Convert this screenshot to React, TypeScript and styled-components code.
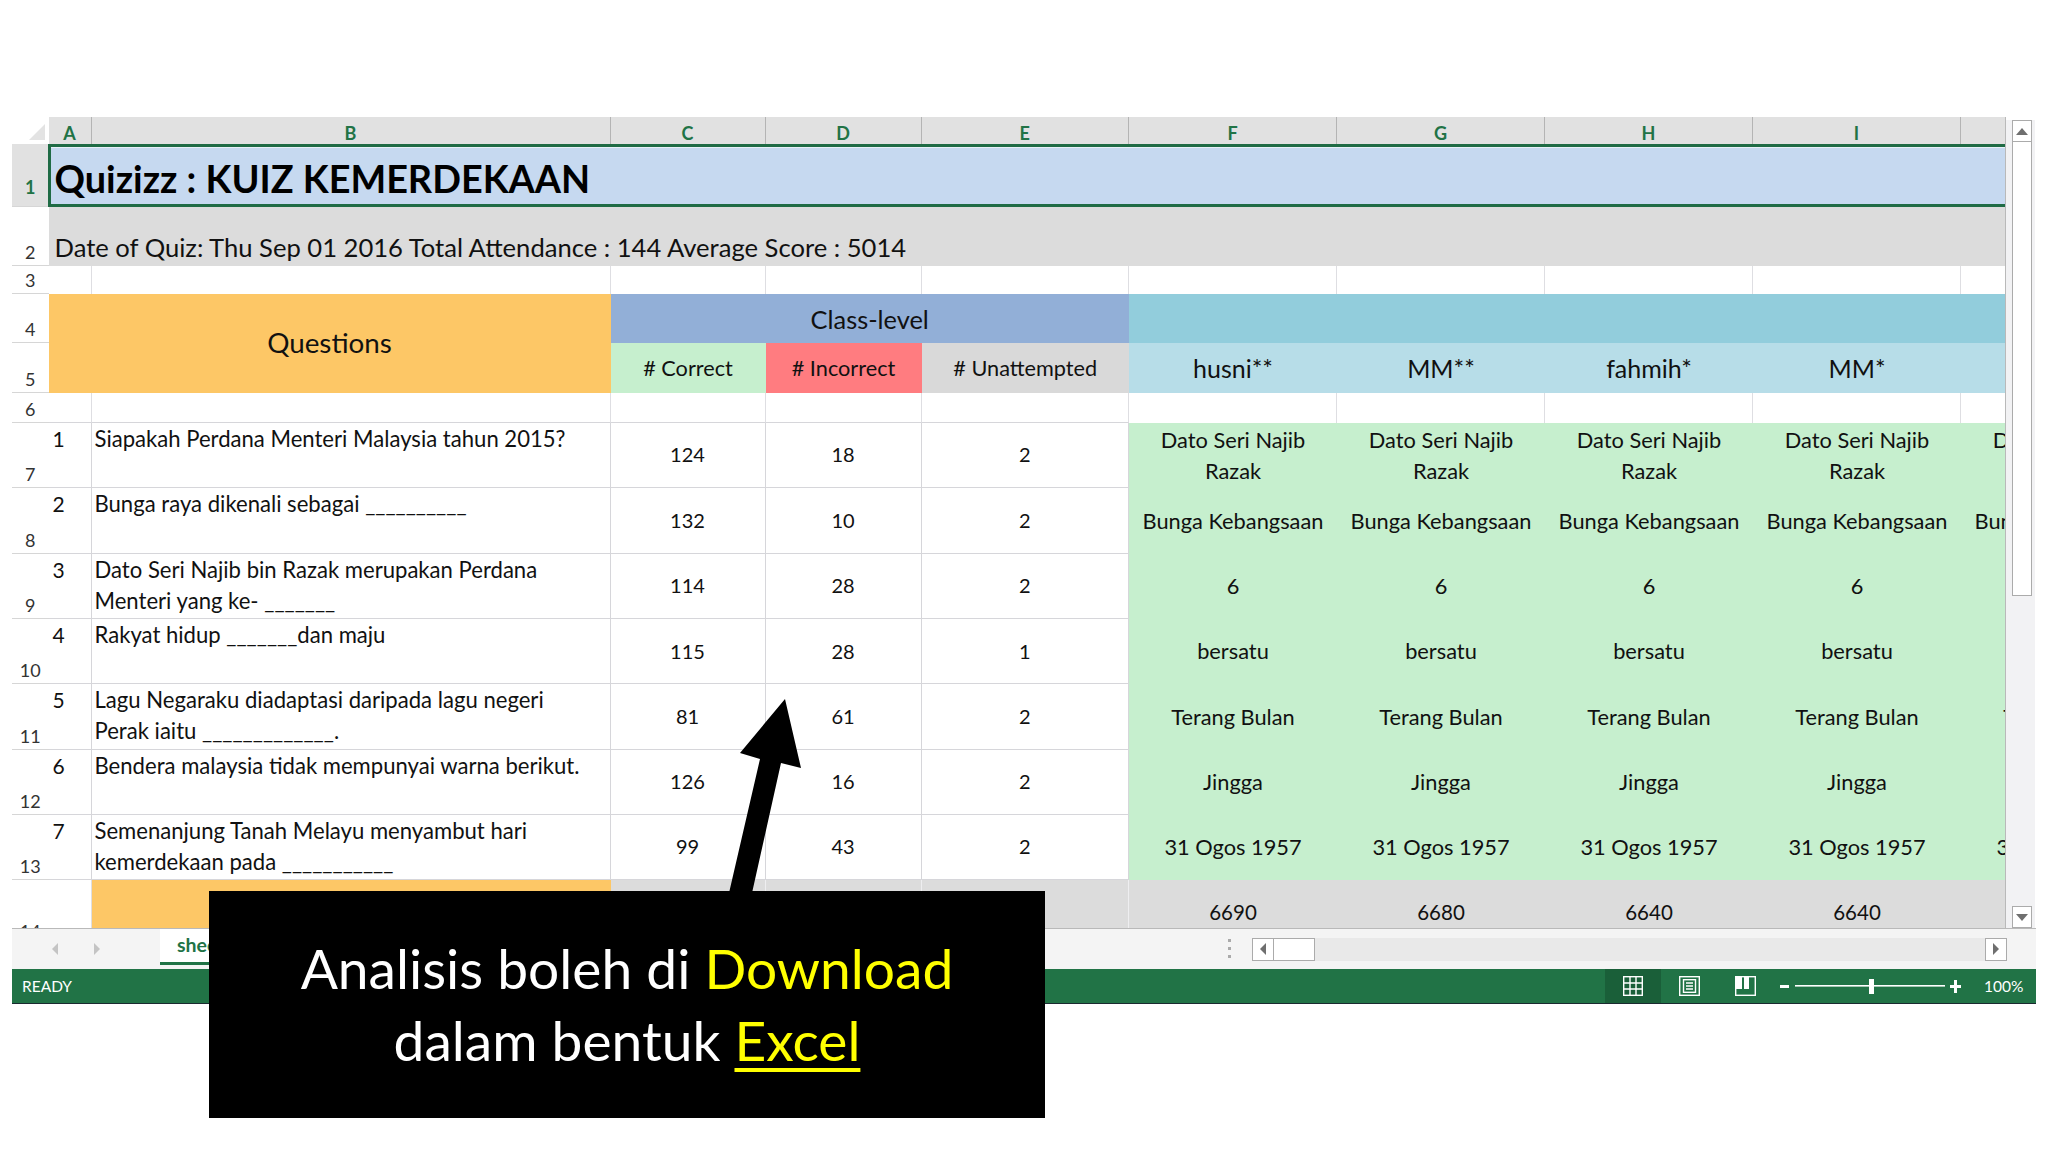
import React from 'react';
import styled, { createGlobalStyle } from 'styled-components';

interface Question {
  n: number;
  text: string;
  correct: number;
  incorrect: number;
  unattempted: number;
  answer: string;
}

const questions: Question[] = [
  { n: 1, text: 'Siapakah Perdana Menteri Malaysia tahun 2015?', correct: 124, incorrect: 18, unattempted: 2, answer: 'Dato Seri Najib Razak' },
  { n: 2, text: 'Bunga raya dikenali sebagai __________', correct: 132, incorrect: 10, unattempted: 2, answer: 'Bunga Kebangsaan' },
  { n: 3, text: 'Dato Seri Najib bin Razak merupakan Perdana Menteri yang ke- _______', correct: 114, incorrect: 28, unattempted: 2, answer: '6' },
  { n: 4, text: 'Rakyat hidup _______dan maju', correct: 115, incorrect: 28, unattempted: 1, answer: 'bersatu' },
  { n: 5, text: 'Lagu Negaraku diadaptasi daripada lagu negeri Perak iaitu _____________.', correct: 81, incorrect: 61, unattempted: 2, answer: 'Terang Bulan' },
  { n: 6, text: 'Bendera malaysia tidak mempunyai warna berikut.', correct: 126, incorrect: 16, unattempted: 2, answer: 'Jingga' },
  { n: 7, text: 'Semenanjung Tanah Melayu menyambut hari kemerdekaan pada ___________', correct: 99, incorrect: 43, unattempted: 2, answer: '31 Ogos 1957' }
];

const columns = ['A', 'B', 'C', 'D', 'E', 'F', 'G', 'H', 'I', ''];
const students = ['husni**', 'MM**', 'fahmih*', 'MM*', ''];
const totals = ['6690', '6680', '6640', '6640', ''];

const GlobalStyle = createGlobalStyle`
  html, body {
    margin: 0;
    padding: 0;
    background: #fff;
  }

  body {
    font-family: 'Lato', 'Liberation Sans', sans-serif;
    color: #111;
  }
`;

const Page = styled.div`
  position: relative;
  width: 2048px;
  height: 1152px;
  overflow: hidden;
  background: #fff;
  padding: 117px 0 0 12px;
  box-sizing: border-box;
`;

const Workbook = styled.div`
  width: 2024px;
  display: flex;
  flex-direction: column;
`;

const SheetArea = styled.div`
  display: flex;
  height: 811px;
`;

const Sheet = styled.div`
  width: 1994px;
  height: 811px;
  overflow: hidden;
  display: grid;
  grid-template-columns: 36.5px 43px 519px 155px 156px 207.5px 208px 208px 208px 208px 208px;
  grid-template-rows: 27px 63px 59px 28px 49px 50px 29.5px 65.5px 65.5px 65.5px 65px 65.5px 65.5px 64.5px 65px;
  border-right: 1px solid #b9b9b9;
  box-sizing: border-box;
`;

const Corner = styled.div`
  position: relative;
  background: #fff;

  &::after {
    content: '';
    position: absolute;
    right: 4px;
    bottom: 4px;
    border-style: solid;
    border-width: 0 0 16px 16px;
    border-color: transparent transparent #e3e3e3 transparent;
  }
`;

const ColumnHead = styled.div`
  background: #e1e1e1;
  border-right: 1.5px solid #b4b4b4;
  color: #217346;
  font-weight: 700;
  font-size: 18px;
  display: flex;
  align-items: flex-end;
  justify-content: center;
  box-sizing: border-box;
`;

const RowHead = styled.div<{ $selected?: boolean }>`
  background: ${(p) => (p.$selected ? '#e1e1e1' : '#fff')};
  color: ${(p) => (p.$selected ? '#217346' : '#333')};
  font-weight: ${(p) => (p.$selected ? 700 : 400)};
  font-size: 18px;
  line-height: 22px;
  border-bottom: 1.5px solid #d6d6d6;
  display: flex;
  align-items: flex-end;
  justify-content: center;
  padding-bottom: ${(p) => (p.$selected ? '8px' : '2px')};
  box-sizing: border-box;
`;

const TitleCell = styled.div`
  grid-column: span 10;
  background: #c6d9f0;
  border: solid #1f6b45;
  border-width: 3px 0 3px 3px;
  box-shadow: inset 0 1px 0 #e8f0f8;
  display: flex;
  align-items: center;
  padding: 6px 0 0 4px;
  margin-left: -1px;
  font-size: 37.8px;
  font-weight: 700;
  color: #000;
  box-sizing: border-box;
`;

const InfoCell = styled.div`
  grid-column: span 10;
  background: #dcdcdc;
  display: flex;
  align-items: flex-end;
  padding: 0 0 3px 6px;
  font-size: 25.6px;
  line-height: 32px;
  box-sizing: border-box;
`;

const Blank = styled.div<{ $ruled?: boolean }>`
  background: #fff;
  border-right: 1.5px solid #dedee2;
  border-bottom: ${(p) => (p.$ruled ? '1.5px solid #d6d6da' : '0')};
  box-sizing: border-box;
`;

const QuestionsHead = styled.div`
  grid-column: span 2;
  grid-row: span 2;
  background: #fdc766;
  display: flex;
  align-items: center;
  justify-content: center;
  font-size: 27.8px;
  box-sizing: border-box;
  padding-bottom: 2px;
`;

const BandHead = styled.div<{ $span: number; $fill: string }>`
  grid-column: span ${(p) => p.$span};
  background: ${(p) => p.$fill};
  display: flex;
  align-items: center;
  justify-content: center;
  font-size: 25.4px;
`;

const SubHead = styled.div<{ $fill: string; $large?: boolean }>`
  background: ${(p) => p.$fill};
  display: flex;
  align-items: center;
  justify-content: center;
  font-size: ${(p) => (p.$large ? '25px' : '21.7px')};
`;

const NumberCell = styled.div`
  background: #fff;
  border-right: 1.5px solid #d6d6da;
  border-bottom: 1.5px solid #d6d6da;
  font-size: 21px;
  line-height: 31px;
  padding: 0 0 0 4px;
  box-sizing: border-box;
`;

const QuestionCell = styled(NumberCell)`
  padding: 0 20px 0 3px;
  font-size: 22.1px;
`;

const CountCell = styled(NumberCell)`
  display: flex;
  align-items: center;
  justify-content: center;
  padding: 0;
  font-size: 20px;
`;

const AnswerCell = styled.div`
  background: #c6efce;
  display: flex;
  align-items: center;
  justify-content: center;
  text-align: center;
  font-size: 21.8px;
  line-height: 31px;
  padding: 0 22px 1.5px;
  box-sizing: border-box;
`;

const WideAnswer = styled(AnswerCell)`
  padding: 0 0 1.5px;
  white-space: nowrap;
`;

const TotalLabel = styled.div`
  background: #fdc766;
`;

const TotalGray = styled.div`
  background: #dcdcdc;
  border-right: 1.5px solid #eeeef0;
`;

const TotalCell = styled.div`
  background: #dcdcdc;
  display: flex;
  align-items: center;
  justify-content: center;
  font-size: 20.5px;
`;

const VScroll = styled.div`
  width: 29px;
  background: linear-gradient(#fff 3px, #f2f2f4 3px);
  padding: 3px 3px 0 6px;
  box-sizing: border-box;
  display: flex;
  flex-direction: column;
`;

const ScrollButton = styled.div`
  height: 22px;
  background: #fff;
  border: 1.5px solid #ababab;
  box-sizing: border-box;
  display: flex;
  align-items: center;
  justify-content: center;
`;

const VThumb = styled.div`
  height: 454px;
  background: #fff;
  border: 1.5px solid #ababab;
  border-top: 0;
  box-sizing: border-box;
`;

const Spacer = styled.div`
  flex: 1;
`;

const Triangle = styled.span<{ $dir: 'up' | 'down' | 'left' | 'right'; $tone?: string }>`
  width: 0;
  height: 0;
  border-style: solid;
  border-color: transparent;
  ${(p) => {
    const c = p.$tone || '#6f6f6f';
    if (p.$dir === 'up') return `border-width: 0 6px 7px 6px; border-bottom-color: ${c};`;
    if (p.$dir === 'down') return `border-width: 7px 6px 0 6px; border-top-color: ${c};`;
    if (p.$dir === 'left') return `border-width: 6px 6px 6px 0; border-right-color: ${c};`;
    return `border-width: 6px 0 6px 6px; border-left-color: ${c};`;
  }}
`;

const TabBar = styled.div`
  height: 41px;
  background: #f4f4f4;
  border-top: 1.5px solid #b9b9b9;
  box-sizing: border-box;
  display: flex;
  align-items: flex-start;
`;

const TabNav = styled.div`
  width: 148px;
  height: 100%;
  display: flex;
  align-items: center;
  gap: 36px;
  padding: 0 0 1px 40px;
  box-sizing: border-box;
`;

const Tab = styled.div`
  width: 110px;
  height: 36px;
  background: #fff;
  border-bottom: 3px solid #217346;
  color: #217346;
  font-weight: 700;
  font-size: 19.5px;
  line-height: 32px;
  padding-left: 17px;
  box-sizing: border-box;
`;

const HScrollGroup = styled.div`
  margin-left: auto;
  margin-right: 29px;
  margin-top: 8.5px;
  width: 779px;
  height: 23px;
  display: flex;
  align-items: stretch;
`;

const SplitDots = styled.div`
  width: 3px;
  height: 21px;
  margin: 1px 21px 0 0;
  background: repeating-linear-gradient(#aaa 0 3px, transparent 3px 8px);
`;

const HTrack = styled.div`
  flex: 1;
  display: flex;
  background: #e9e9e9;
`;

const HButton = styled.div`
  width: 22px;
  background: #fff;
  border: 1.5px solid #ababab;
  box-sizing: border-box;
  display: flex;
  align-items: center;
  justify-content: center;
`;

const HThumb = styled.div`
  width: 41px;
  background: #fff;
  border: 1.5px solid #ababab;
  border-left: 0;
  box-sizing: border-box;
`;

const StatusBar = styled.div`
  height: 35px;
  background: #217346;
  border-bottom: 1.5px solid #1a2a30;
  box-sizing: border-box;
  display: flex;
  align-items: stretch;
  color: #fff;
  font-size: 15.5px;
`;

const StatusText = styled.div`
  display: flex;
  align-items: center;
  padding: 0 0 1px 10px;
`;

const ViewButtons = styled.div`
  margin-left: auto;
  display: flex;
`;

const ViewButton = styled.div<{ $active?: boolean }>`
  width: 56.5px;
  display: flex;
  align-items: center;
  justify-content: center;
  padding-bottom: 1px;
  background: ${(p) => (p.$active ? '#1a5f39' : 'transparent')};
`;

const ZoomControl = styled.svg`
  margin: auto 0 auto 6px;
`;

const ZoomLabel = styled.div`
  width: 52px;
  margin-left: 20px;
  display: flex;
  align-items: center;
  padding-bottom: 1px;
`;

const Callout = styled.div`
  position: absolute;
  left: 209px;
  top: 891px;
  width: 836px;
  height: 227px;
  background: #000;
  color: #fff;
  display: flex;
  flex-direction: column;
  align-items: center;
  justify-content: center;
  font-size: 55.1px;
  line-height: 72px;
`;

const CalloutLine = styled.div`
  position: relative;
  top: -1px;
`;

const Highlight = styled.span<{ $underline?: boolean }>`
  color: #ff0;
  text-decoration: ${(p) => (p.$underline ? 'underline' : 'none')};
  text-decoration-thickness: 4px;
  text-underline-offset: 7px;
`;

const ArrowSvg = styled.svg`
  position: absolute;
  left: 720px;
  top: 690px;
`;

function GridIcon (): React.ReactElement {
  return (
    <svg width='20' height='20' viewBox='0 0 20 20' fill='none' stroke='#fff' strokeWidth='1.4'>
      <rect x='0.7' y='0.7' width='18.6' height='18.6' />
      <path d='M7 1v18M13 1v18M1 7h18M1 13h18' />
    </svg>
  );
}

function PageIcon (): React.ReactElement {
  return (
    <svg width='21' height='20' viewBox='0 0 21 20' fill='none' stroke='#fff' strokeWidth='1.4'>
      <rect x='0.7' y='0.7' width='19.6' height='18.6' />
      <rect x='4.5' y='3.7' width='12' height='12.6' />
      <path d='M7 7h7M7 10h7M7 13h7' />
    </svg>
  );
}

function BreakIcon (): React.ReactElement {
  return (
    <svg width='21' height='20' viewBox='0 0 21 20' fill='none' stroke='#fff' strokeWidth='1.4'>
      <rect x='0.7' y='0.7' width='19.6' height='18.6' />
      <path d='M1 1h6v12H1zM9 1h5v12H9z' fill='#fff' stroke='none' />
    </svg>
  );
}

function App (): React.ReactElement {
  return (
    <Page>
      <GlobalStyle />
      <Workbook>
        <SheetArea>
          <Sheet>
            <Corner />
            {columns.map((c, i) => <ColumnHead key={i}>{c}</ColumnHead>)}

            <RowHead $selected>1</RowHead>
            <TitleCell>Quizizz : KUIZ KEMERDEKAAN</TitleCell>

            <RowHead>2</RowHead>
            <InfoCell>Date of Quiz: Thu Sep 01 2016 Total Attendance : 144 Average Score : 5014</InfoCell>

            <RowHead>3</RowHead>
            {columns.map((c, i) => <Blank key={i} />)}

            <RowHead>4</RowHead>
            <QuestionsHead>Questions</QuestionsHead>
            <BandHead $span={3} $fill='#92afd7'>Class-level</BandHead>
            <BandHead $span={5} $fill='#92cddc' />

            <RowHead>5</RowHead>
            <SubHead $fill='#c6efce'># Correct</SubHead>
            <SubHead $fill='#ff7c80'># Incorrect</SubHead>
            <SubHead $fill='#d9d9d9'># Unattempted</SubHead>
            {students.map((s, i) => <SubHead key={i} $fill='#b7dde8' $large>{s}</SubHead>)}

            <RowHead>6</RowHead>
            {columns.map((c, i) => <Blank key={i} $ruled={i < 5} />)}

            {questions.map((q, idx) => (
              <React.Fragment key={q.n}>
                <RowHead>{idx + 7}</RowHead>
                <NumberCell>{q.n}</NumberCell>
                <QuestionCell>{q.text}</QuestionCell>
                <CountCell>{q.correct}</CountCell>
                <CountCell>{q.incorrect}</CountCell>
                <CountCell>{q.unattempted}</CountCell>
                {students.map((s, i) => (
                  q.n === 2
                    ? <WideAnswer key={i}>{q.answer}</WideAnswer>
                    : <AnswerCell key={i}>{q.answer}</AnswerCell>
                ))}
              </React.Fragment>
            ))}

            <RowHead>14</RowHead>
            <Blank />
            <TotalLabel />
            <TotalGray />
            <TotalGray />
            <TotalGray />
            {totals.map((t, i) => <TotalCell key={i}>{t}</TotalCell>)}
          </Sheet>
          <VScroll>
            <ScrollButton><Triangle $dir='up' /></ScrollButton>
            <VThumb />
            <Spacer />
            <ScrollButton><Triangle $dir='down' /></ScrollButton>
          </VScroll>
        </SheetArea>

        <TabBar>
          <TabNav>
            <Triangle $dir='left' $tone='#c4c4c4' />
            <Triangle $dir='right' $tone='#c4c4c4' />
          </TabNav>
          <Tab>sheet1</Tab>
          <HScrollGroup>
            <SplitDots />
            <HButton><Triangle $dir='left' /></HButton>
            <HTrack>
              <HThumb />
              <Spacer />
              <HButton><Triangle $dir='right' /></HButton>
            </HTrack>
          </HScrollGroup>
        </TabBar>

        <StatusBar>
          <StatusText>READY</StatusText>
          <ViewButtons>
            <ViewButton $active><GridIcon /></ViewButton>
            <ViewButton><PageIcon /></ViewButton>
            <ViewButton><BreakIcon /></ViewButton>
          </ViewButtons>
          <ZoomControl width='184' height='20' viewBox='0 0 184 20' fill='#fff'>
            <rect x='0' y='9' width='9' height='3' />
            <rect x='15' y='9' width='150' height='1.6' />
            <rect x='89' y='3' width='5' height='15' />
            <rect x='170' y='9' width='11' height='3' />
            <rect x='174' y='4' width='3' height='13' />
          </ZoomControl>
          <ZoomLabel>100%</ZoomLabel>
        </StatusBar>
      </Workbook>

      <ArrowSvg width='100' height='210' viewBox='720 690 100 210'>
        <polygon points='785,699 740,753 760,759 729,893 752,893 781,763 801,768' fill='#000' />
      </ArrowSvg>

      <Callout>
        <CalloutLine>Analisis boleh di <Highlight>Download</Highlight></CalloutLine>
        <CalloutLine>dalam bentuk <Highlight $underline>Excel</Highlight></CalloutLine>
      </Callout>
    </Page>
  );
}

export default App;
